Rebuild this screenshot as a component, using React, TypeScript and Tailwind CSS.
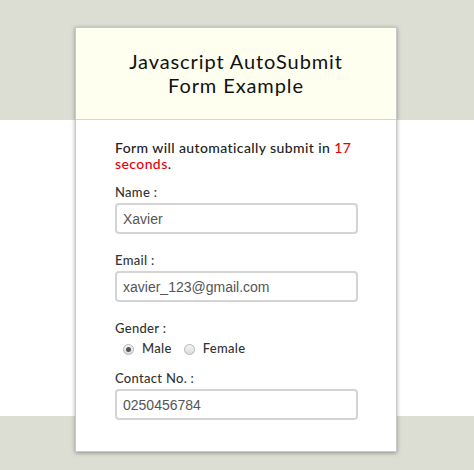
const fieldFont = "font-['Lato','Noto_Sans',sans-serif]";

const Field = ({ label, value }: { label: string; value: string }) => (
  <div className="flex flex-col">
    <label className={`${fieldFont} text-[13px] font-medium leading-4 tracking-[0.3px] text-[#333]`}>{label}</label>
    <input
      readOnly
      value={value}
      className="mt-[3px] h-[31px] w-[243px] rounded-[4px] border-2 border-[#d4d4d4] px-[6px] font-['Liberation_Sans',Arial,sans-serif] text-[14px] text-[#555] outline-none"
    />
  </div>
);

const Radio = ({ checked }: { checked?: boolean }) => (
  <span className="flex h-[11px] w-[11px] items-center justify-center rounded-full border border-[#b5b5b5] bg-[linear-gradient(#f4f4f4,#dcdcdc)]">
    {checked && <span className="h-[5px] w-[5px] rounded-full bg-[#555]" />}
  </span>
);

export default function App() {
  return (
    <div className="h-[470px] w-full overflow-hidden bg-[linear-gradient(to_bottom,#dcddd3_120px,#ffffff_120px,#ffffff_416px,#dcddd3_416px)] pt-[27px]">
      <div className="ml-[75px] w-[322px] border border-[#c9c9c9] bg-white shadow-[0_1px_4px_rgba(0,0,0,0.35)]">
        <div className="flex h-[92px] flex-col items-center justify-center border-b border-[#d6d6d6] bg-[#fffff0] pb-[2px]">
          <h1 className={`${fieldFont} text-center text-[20px] font-normal leading-[24px] tracking-[0.9px] text-[#111]`}>
            Javascript AutoSubmit
            <br />
            Form Example
          </h1>
        </div>
        <div className="flex flex-col px-[39px] pb-[31px] pt-[20px]">
          <p className={`${fieldFont} text-[14px] font-medium leading-[16px] tracking-[0.4px] text-[#222]`}>
            Form will automatically submit in <span className="text-[#e8000b]">17</span>{" "}
            <span className="text-[#e8000b]">seconds</span>.
          </p>
          <div className="mt-[12px] flex flex-col gap-[18px]">
            <Field label="Name :" value="Xavier" />
            <Field label="Email :" value="xavier_123@gmail.com" />
          </div>
          <div className="mt-[18px] flex flex-col">
            <span className={`${fieldFont} text-[13px] font-medium leading-4 tracking-[0.3px] text-[#333]`}>Gender :</span>
            <div className={`${fieldFont} mt-[5px] flex h-[16px] items-center pl-[8px] text-[13px] font-medium tracking-[0.3px] text-[#333]`}>
              <Radio checked />
              <span className="ml-[8px] mr-[12px]">Male</span>
              <Radio />
              <span className="ml-[8px]">Female</span>
            </div>
          </div>
          <div className="mt-[13px]">
            <Field label="Contact No. :" value="0250456784" />
          </div>
        </div>
      </div>
    </div>
  );
}
